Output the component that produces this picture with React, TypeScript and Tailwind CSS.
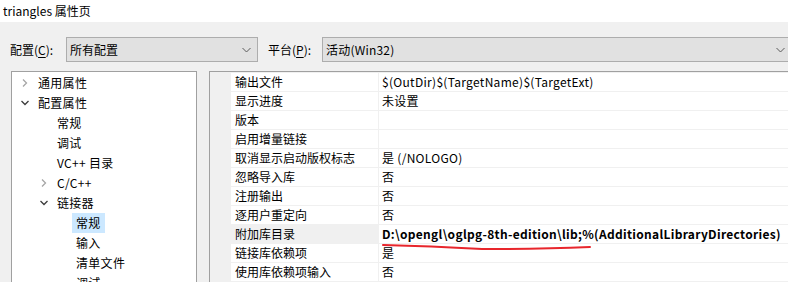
import React from "react";

const Chevron = ({ open }: { open: boolean }) => (
  <svg width="10" height="10" viewBox="0 0 10 10" className="shrink-0">
    {open ? (
      <path d="M1.5 3 L5 6.5 L8.5 3" fill="none" stroke="#3c3c3c" strokeWidth="1.3" />
    ) : (
      <path d="M3 1.5 L6.5 5 L3 8.5" fill="none" stroke="#a6a6a6" strokeWidth="1.3" />
    )}
  </svg>
);

const ComboArrow = () => (
  <svg width="9" height="6" viewBox="0 0 9 6">
    <path d="M0.5 1 L4.5 5 L8.5 1" fill="none" stroke="#5a5a5a" strokeWidth="1" />
  </svg>
);

type TreeItem = { label: string; level: number; chevron?: "open" | "closed"; selected?: boolean };

const tree: TreeItem[] = [
  { label: "通用属性", level: 0, chevron: "closed" },
  { label: "配置属性", level: 0, chevron: "open" },
  { label: "常规", level: 1 },
  { label: "调试", level: 1 },
  { label: "VC++ 目录", level: 1 },
  { label: "C/C++", level: 1, chevron: "closed" },
  { label: "链接器", level: 1, chevron: "open" },
  { label: "常规", level: 2, selected: true },
  { label: "输入", level: 2 },
  { label: "清单文件", level: 2 },
  { label: "调试", level: 2 },
];

const rows: { name: string; value: string; bold?: boolean }[] = [
  { name: "输出文件", value: "$(OutDir)$(TargetName)$(TargetExt)" },
  { name: "显示进度", value: "未设置" },
  { name: "版本", value: "" },
  { name: "启用增量链接", value: "" },
  { name: "取消显示启动版权标志", value: "是 (/NOLOGO)" },
  { name: "忽略导入库", value: "否" },
  { name: "注册输出", value: "否" },
  { name: "逐用户重定向", value: "否" },
  { name: "附加库目录", value: "D:\\opengl\\oglpg-8th-edition\\lib;%(AdditionalLibraryDirectories)", bold: true },
  { name: "链接库依赖项", value: "是" },
  { name: "使用库依赖项输入", value: "否" },
];

export default function App() {
  return (
    <div className="relative w-[788px] h-[282px] overflow-hidden bg-[#f0f0f0] text-[12px] leading-none text-black font-['Noto_Sans_CJK_SC',sans-serif]">
      <div className="h-[22px] bg-white flex items-center pl-[3px]">triangles 属性页</div>

      <div className="mt-[15px] h-[25px] flex items-center">
        <div className="ml-[10px] w-[56px] shrink-0">
          配置(<span className="underline underline-offset-2">C</span>):
        </div>
        <div className="w-[192px] h-[25px] shrink-0 border border-[#adadad] bg-[#e1e1e1] flex items-center justify-between pl-[3px] pr-[6px]">
          <span>所有配置</span>
          <ComboArrow />
        </div>
        <div className="ml-[10px] w-[54px] shrink-0">
          平台(<span className="underline underline-offset-2">P</span>):
        </div>
        <div className="w-[471px] h-[25px] shrink-0 border border-[#adadad] bg-[#e1e1e1] flex items-center justify-between pl-[3px] pr-[7px]">
          <span className="tracking-[0.2px]">活动(Win32)</span>
          <ComboArrow />
        </div>
      </div>

      <div className="mt-[9px] flex h-[300px]">
        <div className="ml-[11px] w-[186px] shrink-0 border border-[#a0a0a0] bg-white pt-[1px]">
          {tree.map((t, i) => (
            <div
              key={i}
              className="h-[20px] flex items-center"
              style={{ paddingLeft: 8 + t.level * 19 }}
            >
              <div className="w-[18px] flex items-center justify-start">
                {t.chevron && <Chevron open={t.chevron === "open"} />}
              </div>
              <div className={"h-[20px] flex items-center px-[4px] -ml-[4px] tracking-[0.3px] " + (t.selected ? "bg-[#cce8ff]" : "")}>
                {t.label}
              </div>
            </div>
          ))}
        </div>

        <div className="ml-[12px] flex-1 border-l border-t border-[#a0a0a0] bg-[#f0f0f0] pt-[1px]">
          <div className="flex">
            <div className="w-[21px] shrink-0" />
            <div className="flex-1 bg-white">
              {rows.map((r, i) => (
                <div key={i} className="flex h-[19px] border-b border-[#f0f0f0]">
                  <div className={"w-[148px] shrink-0 border-r border-[#f0f0f0] flex items-center pl-[4px] " + (r.bold ? "bg-[#f0f0f0]" : "")}>
                    {r.name}
                  </div>
                  <div className={"flex-1 flex items-center pl-[3px] whitespace-nowrap tracking-[0.3px] " + (r.bold ? "font-bold" : "")}>
                    {r.value}
                  </div>
                </div>
              ))}
            </div>
          </div>
        </div>
      </div>

      <svg className="absolute left-0 top-0 pointer-events-none" width="788" height="282">
        <path d="M383 245 Q430 246 482 249 Q540 249 590 247" fill="none" stroke="#e8262c" strokeWidth="2" strokeLinecap="round" />
      </svg>
    </div>
  );
}
